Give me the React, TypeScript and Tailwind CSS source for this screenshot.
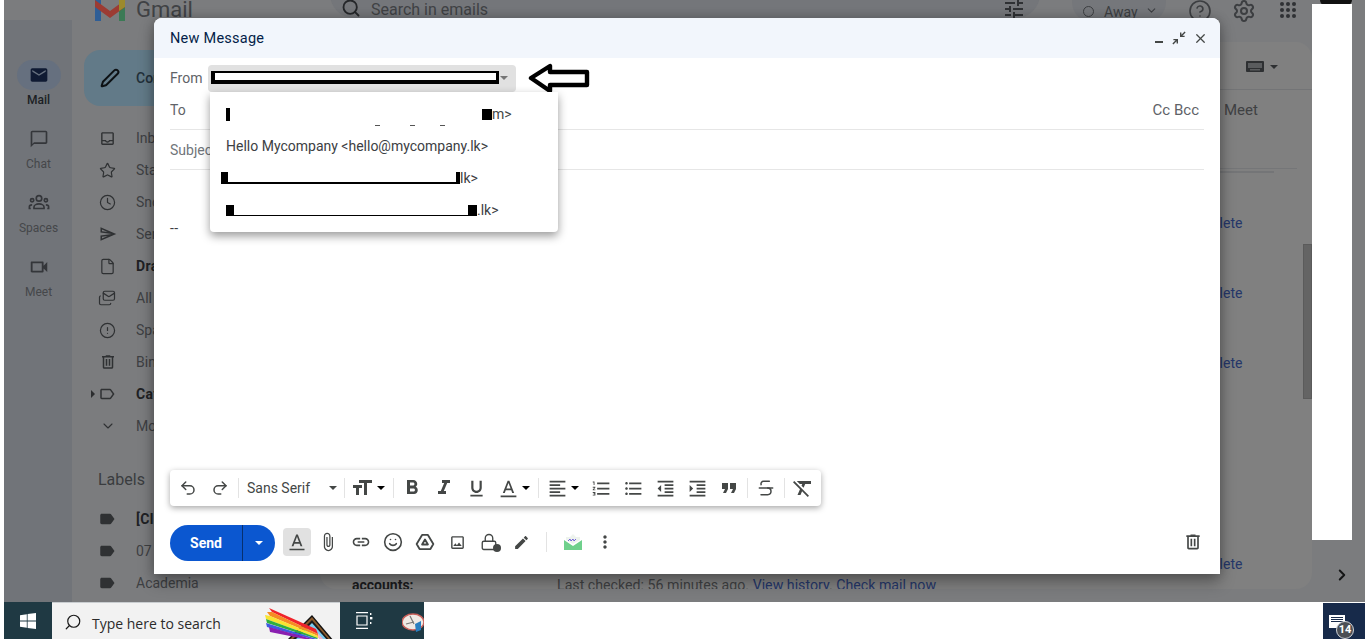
import { ReactNode } from "react";
import {
  ChevronDown,
  ChevronRight,
  CircleAlert,
  Clock,
  File,
  HelpCircle,
  Lock,
  Mails,
  Pen,
  Redo2,
  Search,
  Settings,
  Smile,
  Star,
  Strikethrough,
  Undo2,
  X,
} from "lucide-react";

// material style glyphs that the icon packages draw differently
const P = {
  mail: "M20 4H4c-1.1 0-2 .9-2 2v12c0 1.1.9 2 2 2h16c1.1 0 2-.9 2-2V6c0-1.1-.9-2-2-2zm0 4l-8 5-8-5V6l8 5 8-5v2z",
  chat: "M20 2H4c-1.1 0-2 .9-2 2v18l4-4h14c1.1 0 2-.9 2-2V4c0-1.1-.9-2-2-2zm0 14H6l-2 2V4h16v12z",
  meet: "M17 10.5V7c0-.55-.45-1-1-1H4c-.55 0-1 .45-1 1v10c0 .55.45 1 1 1h12c.55 0 1-.45 1-1v-3.5l4 4v-11l-4 4zM15 16H5V8h10v8z",
  inbox: "M19 3H5c-1.1 0-2 .9-2 2v14c0 1.1.9 2 2 2h14c1.1 0 2-.9 2-2V5c0-1.1-.9-2-2-2zm0 16H5v-3h3.56c.69 1.19 1.97 2 3.44 2s2.75-.81 3.44-2H19v3zm0-5h-4.99c0 1.1-.9 2-2 2s-2-.9-2-2H5V5h14v9z",
  send: "M4.01 6.03l7.51 3.22-7.52-1 .01-2.22m7.5 8.72L4 17.97v-2.22l7.51-1M2.01 3L2 10l15 2-15 2 .01 7L23 12 2.01 3z",
  trash: "M15 4V3H9v1H4v2h1v13c0 1.1.9 2 2 2h10c1.1 0 2-.9 2-2V6h1V4h-5zm2 15H7V6h10v13zM9 8h2v9H9zm4 0h2v9h-2z",
  label: "M17.63 5.84C17.27 5.33 16.67 5 16 5L5 5.01C3.9 5.01 3 5.9 3 7v10c0 1.1.9 1.99 2 1.99L16 19c.67 0 1.27-.33 1.63-.84L22 12l-4.37-6.16zM16 17H5V7h11l3.55 5L16 17z",
  labelFill: "M17.63 5.84C17.27 5.33 16.67 5 16 5L5 5.01C3.9 5.01 3 5.9 3 7v10c0 1.1.9 1.99 2 1.99L16 19c.67 0 1.27-.33 1.63-.84L22 12l-4.37-6.16z",
  tune: "M3 17v2h6v-2H3zM3 5v2h10V5H3zm10 16v-2h8v-2h-8v-2h-2v6h2zM7 9v2H3v2h4v2h2V9H7zm14 4v-2H11v2h10zm-6-4h2V7h4V5h-4V3h-2v6z",
  size: "M9 4v3h5v12h3V7h5V4H9zm-6 8h3v7h3v-7h3V9H3v3z",
  bold: "M15.6 10.79c.97-.67 1.65-1.77 1.65-2.79 0-2.26-1.75-4-4-4H7v14h7.04c2.09 0 3.71-1.7 3.71-3.79 0-1.52-.86-2.82-2.15-3.42zM10 6.5h3c.83 0 1.5.67 1.5 1.5s-.67 1.5-1.5 1.5h-3v-3zm3.5 9H10v-3h3.5c.83 0 1.5.67 1.5 1.5s-.67 1.5-1.5 1.5z",
  italic: "M10 4v3h2.21l-3.42 8H6v3h8v-3h-2.21l3.42-8H18V4z",
  underline: "M12 17c3.31 0 6-2.69 6-6V3h-2.5v8c0 1.93-1.57 3.5-3.5 3.5S8.5 12.93 8.5 11V3H6v8c0 3.31 2.69 6 6 6zm-7 2v2h14v-2H5z",
  color: "M11 3L5.5 17h2.25l1.12-3h6.25l1.12 3h2.25L13 3h-2zm-1.38 9L12 5.67 14.38 12H9.62zM3 20h18v2H3z",
  align: "M15 15H3v2h12v-2zm0-8H3v2h12V7zM3 13h18v-2H3v2zm0 8h18v-2H3v2zM3 3v2h18V3H3z",
  numbered: "M2 17h2v.5H3v1h1v.5H2v1h3v-4H2v1zm1-9h1V4H2v1h1v3zm-1 3h1.8L2 13.1v.9h3v-1H3.2L5 10.9V10H2v1zm5-6v2h14V5H7zm0 14h14v-2H7v2zm0-6h14v-2H7v2z",
  bullets: "M4 10.5c-.83 0-1.5.67-1.5 1.5s.67 1.5 1.5 1.5 1.5-.67 1.5-1.5-.67-1.5-1.5-1.5zm0-6c-.83 0-1.5.67-1.5 1.5S3.17 7.5 4 7.5 5.5 6.83 5.5 6 4.83 4.5 4 4.5zm0 12c-.83 0-1.5.68-1.5 1.5s.68 1.5 1.5 1.5 1.5-.68 1.5-1.5-.67-1.5-1.5-1.5zM7 19h14v-2H7v2zm0-6h14v-2H7v2zm0-8v2h14V5H7z",
  outdent: "M11 17h10v-2H11v2zm-8-5l4 4V8l-4 4zm0 9h18v-2H3v2zM3 3v2h18V3H3zm8 6h10V7H11v2zm0 4h10v-2H11v2z",
  indent: "M3 21h18v-2H3v2zM3 8v8l4-4-4-4zm8 9h10v-2H11v2zM3 3v2h18V3H3zm8 6h10V7H11v2zm0 4h10v-2H11v2z",
  quote: "M6 17h3l2-4V7H5v6h3zm8 0h3l2-4V7h-6v6h3z",
  clear: "M3.27 5L2 6.27l6.97 6.97L6.5 19h3l1.57-3.66L16.73 21 18 19.73 3.55 5.27 3.27 5zM6 5v.18L8.82 8h2.4l-.72 1.68 2.1 2.1L14.21 8H20V5H6z",
  attach: "M16.5 6v11.5c0 2.21-1.79 4-4 4s-4-1.79-4-4V5c0-1.38 1.12-2.5 2.5-2.5s2.5 1.12 2.5 2.5v10.5c0 .55-.45 1-1 1s-1-.45-1-1V6H10v9.5c0 1.38 1.12 2.5 2.5 2.5s2.5-1.12 2.5-2.5V5c0-2.21-1.79-4-4-4S7 2.79 7 5v12.5c0 3.04 2.46 5.5 5.5 5.5s5.5-2.46 5.5-5.5V6h-1.5z",
  link: "M3.9 12c0-1.71 1.39-3.1 3.1-3.1h4V7H7c-2.76 0-5 2.24-5 5s2.24 5 5 5h4v-1.9H7c-1.71 0-3.1-1.39-3.1-3.1zM8 13h8v-2H8v2zm9-6h-4v1.9h4c1.71 0 3.1 1.39 3.1 3.1s-1.39 3.1-3.1 3.1h-4V17h4c2.76 0 5-2.24 5-5s-2.24-5-5-5z",
  photo: "M19 5v14H5V5h14m0-2H5c-1.1 0-2 .9-2 2v14c0 1.1.9 2 2 2h14c1.1 0 2-.9 2-2V5c0-1.1-.9-2-2-2zm-4.86 8.86l-3 3.87L9 13.14 6 17h12l-3.86-5.14z",
  more: "M12 8c1.1 0 2-.9 2-2s-.9-2-2-2-2 .9-2 2 .9 2 2 2zm0 2c-1.1 0-2 .9-2 2s.9 2 2 2 2-.9 2-2-.9-2-2-2zm0 6c-1.1 0-2 .9-2 2s.9 2 2 2 2-.9 2-2-.9-2-2-2z",
  edit: "M3 17.25V21h3.75L17.81 9.94l-3.75-3.75L3 17.25zM20.71 7.04c.39-.39.39-1.02 0-1.41l-2.34-2.34c-.39-.39-1.02-.39-1.41 0l-1.83 1.83 3.75 3.75 1.83-1.83z",
};

function M({ d, className }: { d: string; className?: string }) {
  return (
    <svg viewBox="0 0 24 24" fill="currentColor" className={className}>
      <path d={d} />
    </svg>
  );
}

function Caret({ className }: { className?: string }) {
  return <span className={"inline-block w-0 h-0 border-x-[4px] border-x-transparent border-t-[4px] " + (className ?? "border-t-[#444746]")} />;
}

function RailItem({ icon, label, active }: { icon: ReactNode; label: string; active?: boolean }) {
  return (
    <div className="h-[64px] flex flex-col items-center">
      <div className={"w-[44px] h-[30px] rounded-full flex items-center justify-center " + (active ? "bg-[#66707f]" : "")}>{icon}</div>
      <span className={"text-[12px] leading-[14px] mt-[3px] " + (active ? "text-[#1c1f24] font-medium" : "text-[#45474a]")}>{label}</span>
    </div>
  );
}

function NavItem({ icon, label, bold, arrow }: { icon: ReactNode; label: string; bold?: boolean; arrow?: boolean }) {
  return (
    <div className="relative h-[32px] flex items-center pl-[28px] text-[14px] text-[#3e4043]">
      {arrow && <span className="absolute left-[19px] top-[12px] w-0 h-0 border-y-[4px] border-y-transparent border-l-[4px] border-l-[#2c2d2f]" />}
      <span className="w-[36px] flex justify-start text-[#2f3133]">{icon}</span>
      <span className={bold ? "font-bold text-[#202124] tracking-[0.4px]" : ""}>{label}</span>
    </div>
  );
}

function Tool({ d, big, className }: { d: string; big?: boolean; className?: string }) {
  return (
    <div className={"w-[32px] h-[36px] shrink-0 flex items-center justify-center text-[#444746] " + (className ?? "")}>
      <M d={d} className={big ? "w-[24px] h-[24px]" : "w-[21px] h-[21px]"} />
    </div>
  );
}

function Sep({ className }: { className: string }) {
  return <div className={"w-px h-[20px] bg-[#e3e3e3] shrink-0 " + className} />;
}

function FooterIcon({ children }: { children: ReactNode }) {
  return <div className="w-[32px] h-[28px] shrink-0 flex items-center justify-center text-[#444746]">{children}</div>;
}

function Prism() {
  return (
    <svg viewBox="260 600 75 39" className="w-[75px] h-[39px] shrink-0">
      <polygon points="286,639 312,613 334,639" fill="#111" />
      <polygon points="288,639 312,615 332,639" fill="#8a5a2c" />
      <polygon points="291,639 312,618 330,639" fill="#1b1b1b" />
      <polygon points="294,639 312,621 328,639" fill="#7ccdf0" />
      <polygon points="298,639 312,625 325,639" fill="#f5b5c8" />
      <polygon points="302,639 312,629 321,639" fill="#ffffff" />
      <polygon points="269,606 272,610 318,632 316,627" fill="#f0232b" />
      <polygon points="267,610 270,614 318,634 318,632 272,610" fill="#f68b24" />
      <polygon points="265,613 266,617 318,636 318,634 270,614" fill="#f9e431" />
      <polygon points="266,617 267,621 317,637 318,636" fill="#2fae3e" />
      <polygon points="266,621 267,625 316,638 317,637" fill="#3d5be0" />
      <polygon points="269,625 270,630 315,639 316,638" fill="#8a1fb0" />
    </svg>
  );
}

function GmailBackground() {
  return (
    <div className="h-[602px] bg-[#7b7c7e] flex flex-col overflow-hidden">
      {/* Top bar, scrolled partly out of view */}
      <div className="h-[20px] shrink-0 flex items-center relative text-[#3c3e41]">
        <svg viewBox="0 0 30 22" className="absolute left-[91px] top-0 w-[30px] h-[22px]">
          <path d="M0 21V0h6v21z" fill="#2f5e96" />
          <path d="M24 21V0h6v21z" fill="#3b7a55" />
          <path d="M0 0l15 11L30 0v7L15 18 0 7z" fill="#9c3b33" />
          <path d="M24 0h6v7l-6 4z" fill="#9c8a2d" />
        </svg>
        <span className="absolute left-[132px] top-[-3px] text-[22px] leading-[26px] text-[#404245]">Gmail</span>
        <div className="absolute left-[326px] top-[-30px] w-[710px] h-[48px] rounded-full bg-[#74767a] flex items-end">
          <Search className="w-[20px] h-[20px] ml-[11px] text-[#25272a]" strokeWidth={2.2} />
          <span className="ml-[10px] mb-[-2px] text-[16px] leading-[20px] text-[#404245]">Search in emails</span>
          <M d={P.tune} className="absolute left-[672px] bottom-[-3px] w-[24px] h-[24px] text-[#2f3134]" />
        </div>
        <div className="absolute left-[1068px] top-[-18px] w-[94px] h-[40px] rounded-full bg-[#75777b] flex items-end pb-[2px] pl-[11px] text-[14px]">
          <span className="w-[11px] h-[11px] rounded-full border-[1.5px] border-[#3c3e41] mb-[3px]" />
          <span className="ml-[10px] leading-[16px]">Away</span>
          <ChevronDown className="w-[13px] h-[13px] ml-[7px] mb-[3px]" />
        </div>
        <HelpCircle className="absolute left-[1184px] top-[-1px] w-[24px] h-[24px]" strokeWidth={1.6} />
        <Settings className="absolute left-[1228px] top-[-1px] w-[24px] h-[24px]" strokeWidth={2} />
        <div className="absolute left-[1276px] top-[2px] grid grid-cols-3 gap-[2px]">
          {[0, 1, 2, 3, 4, 5, 6, 7, 8].map((n) => (
            <span key={n} className="w-[4px] h-[4px] rounded-full bg-[#2f3134]" />
          ))}
        </div>
      </div>

      <div className="flex-1 flex min-h-0">
        {/* Rail */}
        <div className="w-[68px] shrink-0 bg-[#717479] pt-[40px] pl-[1px]">
          <RailItem active label="Mail" icon={<M d={P.mail} className="w-[20px] h-[20px] text-[#0f1a33]" />} />
          <RailItem label="Chat" icon={<M d={P.chat} className="w-[20px] h-[20px] text-[#34363a]" />} />
          <RailItem
            label="Spaces"
            icon={
              <svg viewBox="0 0 24 24" fill="none" stroke="#34363a" strokeWidth="1.8" className="w-[22px] h-[22px]">
                <circle cx="12" cy="7" r="3" />
                <circle cx="4.5" cy="9" r="1.8" />
                <circle cx="19.5" cy="9" r="1.8" />
                <path d="M6.5 18v-1.5c0-2 2.5-3.5 5.5-3.5s5.5 1.5 5.5 3.5V18zM3 18H1.5v-2c0-1 .8-2 3-2M21 18h1.5v-2c0-1-.8-2-3-2" />
              </svg>
            }
          />
          <RailItem label="Meet" icon={<M d={P.meet} className="w-[22px] h-[22px] text-[#34363a]" />} />
        </div>

        {/* Nav column */}
        <div className="w-[248px] shrink-0 pl-[12px]">
          <div className="mt-[30px] w-[160px] h-[56px] rounded-2xl bg-[#627a88] flex items-center pl-[16px] text-[14px] text-[#22303a] font-medium">
            <Pen className="w-[20px] h-[20px] text-[#0d1114] mr-[16px]" strokeWidth={2.4} />
            Compose
          </div>
          <div className="mt-[16px] -ml-[12px]">
            <NavItem label="Inbox" icon={<M d={P.inbox} className="w-[17px] h-[17px] ml-[-1px]" />} />
            <NavItem label="Starred" icon={<Star className="w-[17px] h-[17px] -ml-[1px]" strokeWidth={1.7} />} />
            <NavItem label="Snoozed" icon={<Clock className="w-[17px] h-[17px] -ml-[1px]" strokeWidth={1.7} />} />
            <NavItem label="Sent" icon={<M d={P.send} className="w-[18px] h-[18px] -ml-[1px]" />} />
            <NavItem bold label="Drafts" icon={<File className="w-[17px] h-[17px] -ml-[1px]" strokeWidth={1.7} />} />
            <NavItem label="All Mail" icon={<Mails className="w-[18px] h-[18px] -ml-[2px]" strokeWidth={1.6} />} />
            <NavItem label="Spam" icon={<CircleAlert className="w-[17px] h-[17px] -ml-[1px]" strokeWidth={1.7} />} />
            <NavItem label="Bin" icon={<M d={P.trash} className="w-[18px] h-[18px] -ml-[1px]" />} />
            <NavItem arrow bold label="Categories" icon={<M d={P.label} className="w-[18px] h-[18px] -ml-[2px]" />} />
            <NavItem label="More" icon={<ChevronDown className="w-[16px] h-[16px]" strokeWidth={1.6} />} />
          </div>
          <div className="mt-[28px] pl-[14px] text-[16px] leading-[20px] text-[#3a3c3f]">Labels</div>
          <div className="mt-[13px] -ml-[12px]">
            <NavItem bold label="[Clients]" icon={<M d={P.labelFill} className="w-[18px] h-[18px] -ml-[2px]" />} />
            <NavItem label="07 Projects" icon={<M d={P.labelFill} className="w-[18px] h-[18px] -ml-[2px]" />} />
            <NavItem label="Academia" icon={<M d={P.labelFill} className="w-[18px] h-[18px] -ml-[2px]" />} />
          </div>
        </div>

        {/* Settings panel */}
        <div className="w-[992px] shrink-0 h-[547px] mt-[22px] rounded-2xl bg-[#808080] overflow-hidden flex flex-col relative text-[14px] text-[#3f4143]">
          <div className="h-[48px] shrink-0 border-b border-[#737476] flex items-center justify-end pr-[34px] pt-[2px]">
            <svg viewBox="0 0 18 11" className="w-[18px] h-[11px]">
              <rect width="18" height="11" rx="1" fill="#2e3032" />
              <rect x="2" y="2" width="14" height="5" fill="#5a5c5e" />
              <rect x="4" y="8" width="10" height="1.5" fill="#5a5c5e" />
            </svg>
            <Caret className="ml-[6px] border-t-[#2e3032]" />
          </div>
          <div className="h-[41px] shrink-0 flex items-center pl-[904px] text-[15px]">Meet</div>
          <div className="w-[977px] h-px bg-[#757678] mt-[37px]" />
          <div className="w-[954px] h-[2px] bg-[#747577] mt-[2px]" />
          <div className="mt-[40px] pl-[883px] text-[#25376a] flex flex-col shrink-0">
            <span className="h-[70px] leading-[20px]">Delete</span>
            <span className="h-[70px] leading-[20px]">Delete</span>
            <span className="h-[201px] leading-[20px]">Delete</span>
            <span className="h-[20px] leading-[20px]">Delete</span>
          </div>
          <div className="flex-1 min-h-0 flex pl-[32px] mt-[1px]">
            <span className="w-[205px] font-bold text-[#1b1c1e] leading-[20px]">accounts:</span>
            <span className="leading-[20px] text-[14.2px]">
              Last checked: 56 minutes ago. <span className="text-[#25376a]">View history</span>.{" "}
              <span className="text-[#25376a]">Check mail now</span>
            </span>
          </div>
          <div className="absolute left-[983px] top-[202px] w-[9px] h-[155px] bg-[#646464] border border-[#5b5b5b]" />
        </div>

        <div className="flex-1 relative">
          <ChevronRight className="absolute left-[21px] top-[546px] w-[18px] h-[18px] text-[#141516]" strokeWidth={2.6} />
        </div>
      </div>
    </div>
  );
}

function Compose() {
  return (
    <div className="absolute left-[154px] top-[18px] w-[1066px] h-[556px] bg-white rounded-t-lg flex flex-col shadow-[0_8px_16px_rgba(0,0,0,0.3),0_0_12px_rgba(0,0,0,0.2)]">
      <div className="h-[40px] shrink-0 bg-[#f2f6fc] rounded-t-lg flex items-center pl-4 pr-[12px]">
        <span className="text-[14.5px] tracking-[0.25px] text-[#041e49] mt-[2px]">New Message</span>
        <div className="ml-auto flex items-center text-[#444746]">
          <span className="w-[8px] h-[2px] bg-[#444746] mt-[7px]" />
          <svg viewBox="0 0 14 14" fill="#444746" className="w-[14px] h-[14px] ml-[9px]">
            <path d="M8 6V1.5h1.4v2.2L12.6.5l1 1-3.2 3.2h2.2V6zM6 8v4.5H4.6v-2.2L1.4 13.5l-1-1 3.2-3.2H1.4V8z" />
          </svg>
          <X className="w-[15px] h-[15px] ml-[7px]" strokeWidth={2} />
        </div>
      </div>

      <div className="h-[40px] shrink-0 flex items-center pl-4 text-[14px] text-[#5f6368]">
        <span className="w-[38px]">From</span>
        <div className="relative w-[308px] h-[27px] bg-[#e1e1e1] rounded flex items-center pl-[3px]">
          <div className="w-[288px] h-[13px] bg-white border-l-[4px] border-r-[3px] border-t-[2px] border-b-[4px] border-black -mt-[1px]" />
          <Caret className="ml-[1px] border-t-[#757575]" />
        </div>
        <svg viewBox="0 0 62 30" className="ml-[12px] w-[62px] h-[30px]">
          <path d="M3 15 L22 3 V9 H59 V22 H22 V28 Z" fill="none" stroke="#000" strokeWidth="4.4" strokeLinejoin="round" />
        </svg>
      </div>

      <div className="h-[32px] shrink-0 mx-4 border-b border-[#e6e6e6] flex items-center justify-between text-[14px] text-[#5f6368] pb-[7px]">
        <span>To</span>
        <span className="mr-[5px] text-[15px]">Cc Bcc</span>
      </div>
      <div className="h-[40px] shrink-0 mx-4 border-b border-[#e6e6e6] flex items-center text-[14px] text-[#70757a] pt-[2px]">Subject</div>

      <div className="flex-1 min-h-0 pl-4 pt-[49px] text-[14px] leading-[18px] tracking-[0.5px] text-[#3c4043]">--</div>

      {/* Formatting bar */}
      <div className="h-[36px] shrink-0 mx-4 w-[651px] bg-white rounded-sm flex items-center pl-[2px] shadow-[0_2px_6px_rgba(0,0,0,0.35)]">
        <div className="w-[32px] h-[36px] flex items-center justify-center text-[#444746]">
          <Undo2 className="w-[18px] h-[18px]" strokeWidth={2} />
        </div>
        <div className="w-[32px] h-[36px] flex items-center justify-center text-[#444746]">
          <Redo2 className="w-[18px] h-[18px]" strokeWidth={2} />
        </div>
        <Sep className="ml-[2px]" />
        <div className="w-[101px] pl-[8px] flex items-center text-[14px] text-[#444746]">
          <span className="w-[85px]">Sans Serif</span>
          <Caret className="-ml-[3px]" />
        </div>
        <Sep className="ml-[4px]" />
        <M d={P.size} className="w-[24px] h-[24px] ml-[5px] text-[#444746]" />
        <Caret className="ml-[3px]" />
        <Sep className="ml-[8px]" />
        <div className="ml-[2px] flex items-center">
          <Tool big d={P.bold} />
          <Tool big d={P.italic} />
          <Tool d={P.underline} />
          <Tool d={P.color} />
          <Caret className="-ml-[2px]" />
        </div>
        <Sep className="ml-[8px]" />
        <Tool d={P.align} className="ml-[2px]" />
        <Caret className="-ml-[2px]" />
        <Tool d={P.numbered} className="ml-[6px]" />
        <Tool d={P.bullets} />
        <Tool d={P.outdent} />
        <Tool d={P.indent} />
        <Tool big d={P.quote} />
        <Sep className="ml-[2px]" />
        <div className="w-[32px] ml-[2px] flex justify-center text-[#444746]">
          <Strikethrough className="w-[20px] h-[20px]" strokeWidth={1.8} />
        </div>
        <Sep className="ml-[2px]" />
        <Tool big d={P.clear} className="ml-[2px]" />
      </div>

      {/* Send row */}
      <div className="h-[68px] shrink-0 flex items-center px-4 pt-[6px]">
        <div className="w-[105px] h-[36px] rounded-full bg-[#0b57d0] flex text-white">
          <span className="w-[72px] flex items-center justify-center text-[14px] font-bold">Send</span>
          <span className="w-px bg-[#06306f]" />
          <span className="flex-1 flex items-center justify-center">
            <Caret className="border-t-white" />
          </span>
        </div>
        <div className="ml-[8px] -mt-[2px] w-[28px] h-[28px] shrink-0 rounded bg-[#e1e1e1] flex items-center justify-center text-[#444746]">
          <M d={P.color} className="w-[20px] h-[20px]" />
        </div>
        <div className="ml-[1px] -mt-[2px] flex items-center">
          <FooterIcon>
            <M d={P.attach} className="w-[20px] h-[20px]" />
          </FooterIcon>
          <div className="w-px" />
          <FooterIcon>
            <M d={P.link} className="w-[20px] h-[20px]" />
          </FooterIcon>
          <FooterIcon>
            <Smile className="w-[20px] h-[20px]" strokeWidth={1.9} />
          </FooterIcon>
          <FooterIcon>
            <svg viewBox="0 0 24 24" fill="none" stroke="currentColor" strokeWidth="2.2" strokeLinejoin="round" className="w-[20px] h-[20px]">
              <path d="M8.5 3.5h7L22 14.5 18.5 20.5h-13L2 14.5z" />
              <path d="M12 9l3.5 6h-7z" />
            </svg>
          </FooterIcon>
          <FooterIcon>
            <M d={P.photo} className="w-[17px] h-[17px]" />
          </FooterIcon>
          <FooterIcon>
            <span className="relative">
              <Lock className="w-[18px] h-[18px]" strokeWidth={1.8} />
              <span className="absolute right-[-3px] bottom-[-1px] w-[8px] h-[8px] rounded-full bg-[#444746]" />
            </span>
          </FooterIcon>
          <FooterIcon>
            <M d={P.edit} className="w-[17px] h-[17px]" />
          </FooterIcon>
          <div className="ml-[9px] w-px h-[20px] bg-[#e3e3e3]" />
          <div className="ml-[10px] w-[32px] flex justify-center">
            <svg viewBox="0 0 18 16" className="w-[18px] h-[16px]">
              <path d="M0 6l9 6 9-6v10H0z" fill="#6fd08c" />
              <path d="M2 6V3h4l3-3 3 3h4v3l-7 4z" fill="#eef3ee" />
              <path d="M4 7l2-2 1 2 2-2 1 2 2-2" fill="none" stroke="#7466d8" strokeWidth="1" />
            </svg>
          </div>
          <FooterIcon>
            <M d={P.more} className="w-[20px] h-[20px]" />
          </FooterIcon>
        </div>
        <div className="ml-auto mr-[1px] -mt-[2px] text-[#444746]">
          <M d={P.trash} className="w-[20px] h-[20px]" />
        </div>
      </div>

      {/* From address dropdown */}
      <div className="absolute left-[56px] top-[74px] w-[348px] h-[140px] bg-white rounded-b shadow-[0_4px_10px_rgba(0,0,0,0.4)] py-[6px] text-[14px] text-[#3c4043]">
        <div className="h-[32px] relative flex items-center pl-[16px]">
          <span className="w-[4px] h-[13px] bg-black" />
          <span className="w-[252px]" />
          <span className="w-[10px] h-[11px] bg-black" />
          <span className="text-[#444746]">m&gt;</span>
          <span className="absolute left-[165px] top-[27px] w-[5px] h-px bg-[#555]" />
          <span className="absolute left-[200px] top-[27px] w-[5px] h-px bg-[#555]" />
          <span className="absolute left-[230px] top-[27px] w-[5px] h-px bg-[#555]" />
        </div>
        <div className="h-[32px] flex items-center pl-[16px] whitespace-nowrap">Hello Mycompany &lt;hello@mycompany.lk&gt;</div>
        <div className="h-[32px] flex items-center pl-[11px]">
          <div className="w-[239px] h-[12px] border-l-[7px] border-r-[4px] border-b-[2px] border-black" />
          <span>lk&gt;</span>
        </div>
        <div className="h-[32px] flex items-center pl-[16px]">
          <div className="w-[251px] h-[11px] border-l-[8px] border-r-[9px] border-b border-black" />
          <span>.lk&gt;</span>
        </div>
      </div>
    </div>
  );
}

export default function App() {
  return (
    <div className="relative w-[1365px] h-[639px] overflow-hidden bg-white pl-[4px] font-['Roboto',sans-serif]">
      <GmailBackground />

      {/* Taskbar */}
      <div className="h-[37px] flex">
        <div className="w-[420px] flex bg-[#1f3943]">
          <div className="w-[48px] flex items-center justify-center">
            <svg viewBox="0 0 16 16" className="w-[16px] h-[16px]" fill="#fff">
              <path d="M0 2.2L6.8 1.2V7.6H0zM7.6 1.1L16 0V7.6H7.6zM0 8.4H6.8V14.8L0 13.8zM7.6 8.4H16V16L7.6 14.9z" />
            </svg>
          </div>
          <div className="w-[288px] bg-[#f2f2f2] border-t border-[#c9cdd0] flex items-center pl-[12px] overflow-hidden">
            <Search className="w-[18px] h-[18px] text-[#1a1a1a] -scale-x-100 shrink-0 mt-[2px]" strokeWidth={1.6} />
            <span className="ml-[10px] mt-[4px] text-[14px] text-[#2b2b2b] font-['Open_Sans',sans-serif] whitespace-nowrap">Type here to search</span>
            <span className="ml-auto mr-[5px] flex">
              <Prism />
            </span>
          </div>
          <div className="w-[48px] flex items-center justify-center">
            <svg viewBox="0 0 18 17" className="w-[18px] h-[17px]" fill="none" stroke="#fff" strokeWidth="1.2">
              <path d="M1 .6h12M1 16.4h12M2 4h10v9H2z" />
              <rect x="15" y="5" width="2.4" height="2.4" fill="#fff" stroke="none" />
              <rect x="15" y="1" width="1.4" height="2" fill="#fff" stroke="none" />
              <rect x="15" y="10" width="1.4" height="2" fill="#fff" stroke="none" />
            </svg>
          </div>
          <div className="w-[36px] flex items-center justify-end overflow-hidden">
            <svg viewBox="0 0 22 24" className="w-[22px] h-[24px] shrink-0 mt-[3px]">
              <ellipse cx="11" cy="12" rx="11" ry="8" fill="#efe9e4" stroke="#c9605a" strokeWidth="1.4" />
              <path d="M8 6l4 8M4 14l8-2" stroke="#777" strokeWidth="1.2" />
              <path d="M13 14l6-3v9l-5 2z" fill="#2a7fc0" />
            </svg>
          </div>
        </div>
        <div className="flex-1" />
        <div className="relative w-[42px] bg-[#172a4a] mt-[1px]">
          <div className="absolute left-[6px] top-[12px] w-[16px] h-[13px] bg-white flex flex-col gap-[1px] pt-[2px] px-[2px]">
            <span className="h-px bg-[#172a4a]" />
            <span className="h-px bg-[#172a4a]" />
            <span className="h-px bg-[#172a4a]" />
          </div>
          <div className="absolute left-[13px] top-[18px] w-[18px] h-[18px] rounded-full bg-[#4b4f55] border border-[#d0d3d8] flex items-center justify-center text-[11px] font-bold text-white">14</div>
        </div>
      </div>

      {/* Redaction over the avatar area */}
      <div className="absolute left-[1320px] top-0 w-[32px] h-[6px] rounded-b-full bg-[#111]" />
      <div className="absolute left-[1312px] top-[4px] w-[40px] h-[536px] bg-white" />

      <Compose />
    </div>
  );
}
